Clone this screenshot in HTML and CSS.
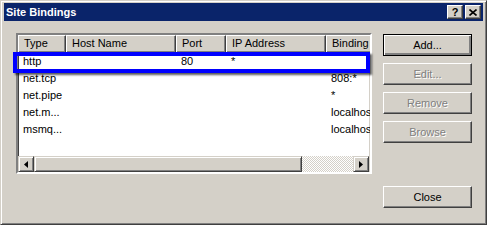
FILE: index.html
```html
<!DOCTYPE html>
<html lang="en">
<head>
    <meta charset="UTF-8">
    <title>Site Bindings</title>
    <link rel="stylesheet" href="styles.css">
</head>
<body>
    <div class="window">
        <div class="title-bar">
            <span class="title-text">Site Bindings</span>
            <div class="caption-buttons">
                <span class="caption-btn">?</span>
                <span class="caption-btn">
                    <svg width="8" height="7" viewBox="0 0 8 7"><path d="M0.5 0.5 L7.5 6.5 M7.5 0.5 L0.5 6.5" stroke="#000" stroke-width="1.6"/></svg>
                </span>
            </div>
        </div>

        <div class="content">
            <div class="list">
                <div class="list-body">
                    <div class="list-head">
                        <div class="col-head">Type</div>
                        <div class="col-head">Host Name</div>
                        <div class="col-head">Port</div>
                        <div class="col-head">IP Address</div>
                        <div class="col-head">Binding</div>
                    </div>
                    <div class="list-row">
                        <div class="cell">http</div><div class="cell"></div><div class="cell">80</div><div class="cell">*</div><div class="cell"></div>
                    </div>
                    <div class="list-row">
                        <div class="cell">net.tcp</div><div class="cell"></div><div class="cell"></div><div class="cell"></div><div class="cell">808:*</div>
                    </div>
                    <div class="list-row">
                        <div class="cell">net.pipe</div><div class="cell"></div><div class="cell"></div><div class="cell"></div><div class="cell">*</div>
                    </div>
                    <div class="list-row">
                        <div class="cell">net.m...</div><div class="cell"></div><div class="cell"></div><div class="cell"></div><div class="cell">localhost</div>
                    </div>
                    <div class="list-row">
                        <div class="cell">msmq...</div><div class="cell"></div><div class="cell"></div><div class="cell"></div><div class="cell">localhost</div>
                    </div>

                    <div class="hscroll">
                        <span class="scroll-btn">
                            <svg width="4" height="7" viewBox="0 0 4 7"><path d="M4 0 L0 3.5 L4 7 Z" fill="#000"/></svg>
                        </span>
                        <span class="scroll-thumb"></span>
                        <span class="scroll-track"></span>
                        <span class="scroll-btn">
                            <svg width="4" height="7" viewBox="0 0 4 7"><path d="M0 0 L4 3.5 L0 7 Z" fill="#000"/></svg>
                        </span>
                    </div>
                </div>
                <div class="highlight"></div>
            </div>

            <div class="button-col">
                <button class="btn default">Add...</button>
                <button class="btn" disabled>Edit...</button>
                <button class="btn" disabled>Remove</button>
                <button class="btn" disabled>Browse</button>
                <button class="btn close-btn">Close</button>
            </div>
        </div>
    </div>
</body>
</html>
```

FILE: styles.css
```css
body {
    margin: 0;
    background: #d4d0c8;
    font-family: "Liberation Sans", Arial, sans-serif;
    font-size: 11px;
    color: #000;
}
.window {
    box-sizing: border-box;
    width: 487px;
    height: 225px;
    background: #d4d0c8;
    border: 1px solid;
    border-color: #d4d0c8 #404040 #404040 #d4d0c8;
    box-shadow: inset 1px 1px #fff, inset -1px -1px #808080;
    padding: 2px 3px;
}
.title-bar {
    height: 18px;
    background: #0a246a;
    display: flex;
    align-items: center;
    justify-content: space-between;
    padding: 0 2px 0 2px;
}
.title-text {
    color: #fff;
    font-weight: bold;
    font-size: 11px;
}
.caption-buttons {
    display: flex;
    gap: 2px;
}
.caption-btn {
    box-sizing: border-box;
    width: 16px;
    height: 14px;
    background: #d4d0c8;
    border: 1px solid;
    border-color: #fff #404040 #404040 #fff;
    box-shadow: inset -1px -1px #808080;
    display: flex;
    align-items: center;
    justify-content: center;
    font-weight: bold;
    font-size: 11px;
    line-height: 1;
}
.content {
    display: flex;
    gap: 11px;
    padding: 12px 0 0 12px;
}
.list {
    position: relative;
    box-sizing: border-box;
    width: 356px;
    height: 141px;
    border: 2px solid;
    border-color: #808080 #fff #fff #808080;
    box-shadow: inset 1px 1px #404040, inset -1px -1px #d4d0c8;
    background: #fff;
}
.list-body {
    position: absolute;
    left: 0;
    top: 0;
    right: 0;
    bottom: 0;
    overflow: hidden;
    padding: 0;
}
.list-head,
.list-row {
    display: grid;
    grid-template-columns: 48px 110px 50px 100px 80px;
}
.list-head {
    height: 18px;
}
.col-head {
    box-sizing: border-box;
    background: #d4d0c8;
    border: 1px solid;
    border-color: #fff #404040 #404040 #fff;
    box-shadow: inset -1px -1px #808080;
    padding-left: 5px;
    line-height: 15px;
    white-space: nowrap;
}
.list-row {
    height: 17px;
}
.cell {
    padding-left: 5px;
    line-height: 17px;
    white-space: nowrap;
    overflow: hidden;
}
.hscroll {
    position: absolute;
    left: 0;
    right: 1px;
    bottom: 0;
    height: 16px;
    display: flex;
}
.scroll-btn,
.scroll-thumb {
    box-sizing: border-box;
    height: 16px;
    background: #d4d0c8;
    border: 1px solid;
    border-color: #d4d0c8 #404040 #404040 #d4d0c8;
    box-shadow: inset 1px 1px #fff, inset -1px -1px #808080;
}
.scroll-btn {
    width: 16px;
    display: flex;
    align-items: center;
    justify-content: center;
}
.scroll-thumb {
    width: 268px;
}
.scroll-track {
    flex: 1;
    background: repeating-conic-gradient(#fff 0 25%, #d4d0c8 0 50%) 0 0 / 2px 2px;
}
.highlight {
    position: absolute;
    left: -5px;
    top: 17px;
    width: 357px;
    height: 21px;
    box-sizing: border-box;
    border: 4px solid #0000ff;
    box-shadow: 2px 2px 2px rgba(0, 0, 0, 0.65);
}
.button-col {
    display: flex;
    flex-direction: column;
    gap: 7px;
    padding-top: 1px;
}
.btn {
    box-sizing: border-box;
    width: 89px;
    height: 22px;
    margin: 0;
    padding: 0;
    background: #d4d0c8;
    font-family: "Liberation Sans", Arial, sans-serif;
    font-size: 11px;
    color: #000;
    border: 1px solid;
    border-color: #fff #404040 #404040 #fff;
    box-shadow: inset -1px -1px #808080;
    border-radius: 0;
}
.btn.default {
    border: 1px solid #000;
    box-shadow: inset 1px 1px #fff, inset -2px -2px #808080, inset -1px -1px #404040;
}
.btn:disabled {
    color: #808080;
    text-shadow: 1px 1px #fff;
}
.close-btn {
    margin-top: 36px;
}
```
